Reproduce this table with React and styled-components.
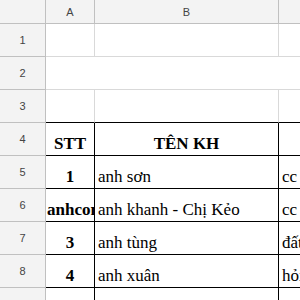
import React from "react";
import styled, { createGlobalStyle } from "styled-components";

const GlobalStyle = createGlobalStyle`
  html, body {
    margin: 0;
    padding: 0;
    background: #ffffff;
    overflow: hidden;
  }
  * { box-sizing: border-box; }
`;

const cols = ["A", "B", "C"];

const rows = [
  { n: 1 },
  { n: 2, merged: true },
  { n: 3, bottomBlack: true },
  { n: 4, table: true, cells: [{ t: "STT", bold: true, center: true }, { t: "TÊN KH", bold: true, center: true }, { t: "" }] },
  { n: 5, table: true, cells: [{ t: "1", bold: true, center: true }, { t: "anh sơn" }, { t: "cc" }] },
  { n: 6, table: true, cells: [{ t: "anhcon", bold: true, tight: true }, { t: "anh khanh - Chị Kẻo" }, { t: "cc" }] },
  { n: 7, table: true, cells: [{ t: "3", bold: true, center: true }, { t: "anh tùng" }, { t: "đất nền" }] },
  { n: 8, table: true, cells: [{ t: "4", bold: true, center: true }, { t: "anh xuân" }, { t: "hỏi giá" }] },
  { n: 9, table: true, cells: [{ t: "" }, { t: "" }, { t: "" }] },
];

export default function App() {
  return (
    <>
      <GlobalStyle />
      <Sheet>
        <Corner />
        {cols.map((c) => (
          <ColHead key={c}>{c}</ColHead>
        ))}
        {rows.map((r) => (
          <React.Fragment key={r.n}>
            <RowHead>{r.n}</RowHead>
            {r.merged ? (
              <Cell $span />
            ) : (
              cols.map((c, i) => {
                const cell = r.cells ? r.cells[i] : { t: "" };
                return (
                  <Cell
                    key={c}
                    $black={r.table}
                    $bottomBlack={r.bottomBlack || r.table}
                    $center={cell.center}
                    $bold={cell.bold}
                    $tight={cell.tight}
                  >
                    <span>{cell.t}</span>
                  </Cell>
                );
              })
            )}
          </React.Fragment>
        ))}
      </Sheet>
    </>
  );
}

const Sheet = styled.div`
  display: grid;
  grid-template-columns: 46px 49px 184px 160px;
  grid-template-rows: 24px repeat(9, 33px);
  width: 439px;
`;

const Corner = styled.div`
  background: #f3f3f3;
  border-right: 1px solid #c0c0c0;
  border-bottom: 1px solid #c0c0c0;
`;

const ColHead = styled.div`
  background: #f3f3f3;
  border-right: 1px solid #c0c0c0;
  border-bottom: 1px solid #c0c0c0;
  display: flex;
  align-items: center;
  justify-content: center;
  font-family: "Liberation Sans", Arial, sans-serif;
  font-size: 11px;
  color: #444444;
`;

const RowHead = styled.div`
  background: #f3f3f3;
  border-right: 1px solid #c0c0c0;
  border-bottom: 1px solid #c0c0c0;
  display: flex;
  align-items: center;
  justify-content: center;
  font-family: "Liberation Sans", Arial, sans-serif;
  font-size: 11px;
  color: #444444;
`;

const Cell = styled.div`
  grid-column: ${(p) => (p.$span ? "2 / -1" : "auto")};
  border-right: 1px solid ${(p) => (p.$span ? "transparent" : p.$black ? "#000000" : "#d9d9d9")};
  border-bottom: 1px solid ${(p) => (p.$bottomBlack ? "#000000" : "#d9d9d9")};
  display: flex;
  align-items: flex-end;
  justify-content: ${(p) => (p.$center ? "center" : "flex-start")};
  padding: 0 ${(p) => (p.$tight ? "0 1px 1px" : "3px 1px")};
  overflow: hidden;
  font-family: "Liberation Serif", "Times New Roman", serif;
  font-size: 17px;
  line-height: 1.15;
  font-weight: ${(p) => (p.$bold ? 700 : 400)};
  color: #000000;
  white-space: nowrap;
  span {
    flex-shrink: 0;
  }
`;
